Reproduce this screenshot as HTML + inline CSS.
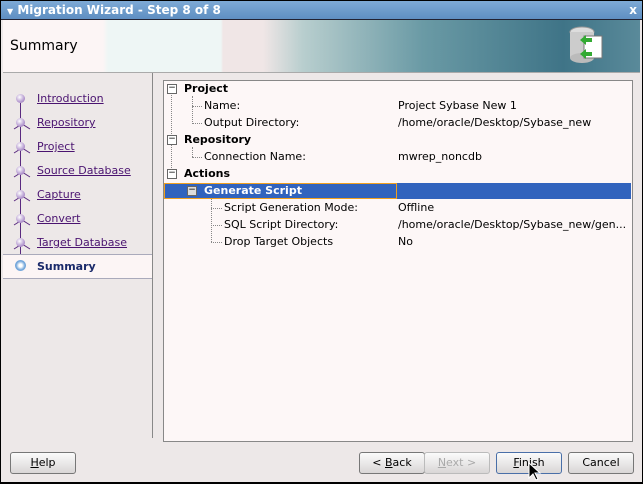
<!DOCTYPE html>
<html><head><style>
body{margin:0;width:643px;height:484px;background:#000;font-family:"DejaVu Sans","Liberation Sans",sans-serif;font-size:11px;overflow:hidden;position:relative}
.a{position:absolute}
.win{left:1px;top:1px;width:641px;height:481px;background:#ede8e8}
.title{left:1px;top:1px;width:641px;height:18px;background:linear-gradient(#7eaad6,#5f8fc2);color:#fff;font-weight:bold;font-size:12px;line-height:18px;border-bottom:1px solid #223}
.hdr{left:3px;top:20px;width:637px;height:52px;background:linear-gradient(90deg,#fcf5f5 0,#fcf5f5 100px,#eef6f5 105px,#eef6f5 218px,#f0e6e6 220px,#f0e6e6 260px,#b8cece 300px,#6a9aa5 420px,#3f7487 560px,#5a8a9a 637px)}
.lnk{color:#4a1370;text-decoration:underline;font-size:11px}
.step{left:37px}
.dot{width:9px;height:9px;border-radius:50%;background:radial-gradient(circle at 40% 35%,#fff,#b59ad0 60%,#8a6aa8);left:16px}
.vl{left:20px;width:1px;background:#5a2a80}
.tree{left:163px;top:80px;width:468px;height:360px;background:#fdf7f7;border:1px solid #888}
.t{font-size:11px;color:#000;white-space:nowrap}
.b{font-weight:bold}
.box{width:8px;height:8px;border:1px solid #666;background:#fff;font-size:9px;line-height:7px;text-align:center}
.btn{height:20px;border:1px solid #777;border-radius:3px;background:linear-gradient(#fbfbfb,#d9d6d6);text-align:center;line-height:20px;font-size:11px}
.dl{border-left:1px dotted #888}
.dh{border-top:1px dotted #888;height:0}
</style></head><body>
<div class="a win"></div>
<div class="a title"><span style="margin-left:6px;font-size:8px">▼</span> Migration Wizard - Step 8 of 8<span style="position:absolute;right:5px">x</span></div>
<div class="a hdr"></div>
<div class="a" style="left:10px;top:38px;font-size:14px">Summary</div>
<svg class="a" style="left:560px;top:24px" width="60" height="46"><ellipse cx="22" cy="8" rx="12" ry="5" fill="#ddd" stroke="#999"/><rect x="10" y="8" width="24" height="26" fill="#ccc"/><ellipse cx="22" cy="34" rx="12" ry="5" fill="#bbb"/><rect x="24" y="12" width="18" height="22" fill="#fff" stroke="#777"/><path d="M20 16l6-5v3h6v4h-6v3z M20 30l6-5v3h6v4h-6v3z" fill="#3a3"/></svg>
<div class="a" style="left:3px;top:72px;width:637px;height:1px;background:#aaa"></div>
<div class="a" style="left:3px;top:73px;width:149px;height:365px;border-right:1px solid #888"></div>
<div class="a vl" style="top:103px;height:160px"></div>
<svg class="a" style="left:12px;top:90px" width="20" height="170"><g stroke="#5a2a80" fill="none"><path d="M2 39l8-5 8 5M2 63l8-5 8 5M2 87l8-5 8 5M2 111l8-5 8 5M2 135l8-5 8 5M2 159l8-5 8 5"/></g></svg>
<div class="a dot" style="top:94px"></div><div class="a lnk step" style="top:92px">Introduction</div>
<div class="a dot" style="top:118px"></div><div class="a lnk step" style="top:116px">Repository</div>
<div class="a dot" style="top:142px"></div><div class="a lnk step" style="top:140px">Project</div>
<div class="a dot" style="top:166px"></div><div class="a lnk step" style="top:164px">Source Database</div>
<div class="a dot" style="top:190px"></div><div class="a lnk step" style="top:188px">Capture </div>
<div class="a dot" style="top:214px"></div><div class="a lnk step" style="top:212px">Convert</div>
<div class="a dot" style="top:238px"></div><div class="a lnk step" style="top:236px">Target Database</div>
<div class="a" style="left:3px;top:254px;width:149px;height:23px;background:#fcf5f5;border-top:1px solid #aab;border-bottom:1px solid #aab"></div>
<div class="a" style="left:15px;top:260px;width:11px;height:11px;border-radius:50%;background:radial-gradient(circle,#fff 20%,#6aa0d8 60%,#cfe0f0)"></div>
<div class="a b" style="left:37px;top:260px;color:#1a2a6a">Summary</div>
<div class="a tree"></div>
<div class="a dl" style="left:171px;top:92px;height:84px"></div>
<div class="a dl" style="left:192px;top:96px;height:28px"></div>
<div class="a dl" style="left:192px;top:147px;height:10px"></div>
<div class="a dh" style="left:192px;top:106px;width:10px"></div>
<div class="a dh" style="left:192px;top:123px;width:10px"></div>
<div class="a dh" style="left:192px;top:157px;width:10px"></div>
<div class="a box" style="left:167px;top:84px">−</div><div class="a t b" style="left:184px;top:82px">Project</div>
<div class="a t" style="left:204px;top:99px">Name:</div><div class="a t" style="left:398px;top:99px">Project Sybase New 1</div>
<div class="a t" style="left:204px;top:116px">Output Directory:</div><div class="a t" style="left:398px;top:116px">/home/oracle/Desktop/Sybase_new</div>
<div class="a box" style="left:167px;top:135px">−</div><div class="a t b" style="left:184px;top:133px">Repository</div>
<div class="a t" style="left:204px;top:150px">Connection Name:</div><div class="a t" style="left:398px;top:150px">mwrep_noncdb</div>
<div class="a box" style="left:167px;top:169px">−</div><div class="a t b" style="left:184px;top:167px">Actions</div>
<div class="a" style="left:164px;top:183px;width:467px;height:16px;background:#3163bd"></div>
<div class="a" style="left:164px;top:183px;width:231px;height:14px;border:1px solid #f0a020"></div>
<div class="a box" style="left:187px;top:186px;background:#ddd">−</div><div class="a t b" style="left:204px;top:184px;color:#fff">Generate Script</div>
<div class="a dl" style="left:211px;top:199px;height:43px"></div>
<div class="a dh" style="left:211px;top:208px;width:11px"></div>
<div class="a dh" style="left:211px;top:225px;width:11px"></div>
<div class="a dh" style="left:211px;top:242px;width:11px"></div>
<div class="a t" style="left:224px;top:201px">Script Generation Mode:</div><div class="a t" style="left:398px;top:201px">Offline</div>
<div class="a t" style="left:224px;top:218px">SQL Script Directory:</div><div class="a t" style="left:398px;top:218px">/home/oracle/Desktop/Sybase_new/gen...</div>
<div class="a t" style="left:224px;top:235px">Drop Target Objects</div><div class="a t" style="left:398px;top:235px">No</div>
<div class="a btn" style="left:10px;top:452px;width:64px"><u>H</u>elp</div>
<div class="a btn" style="left:359px;top:452px;width:64px">&lt; <u>B</u>ack</div>
<div class="a btn" style="left:424px;top:452px;width:64px;color:#aaa;border-color:#bbb"><u>N</u>ext &gt;</div>
<div class="a btn" style="left:496px;top:452px;width:64px;border-color:#4a6fa8"><u>F</u>inish</div>
<div class="a btn" style="left:568px;top:452px;width:64px">Cancel</div>
<svg class="a" style="left:528px;top:462px" width="14" height="20"><path d="M1 1v15l4-4 3 6 2-1-3-6h5z" fill="#000" stroke="#fff"/></svg>
</body></html>
